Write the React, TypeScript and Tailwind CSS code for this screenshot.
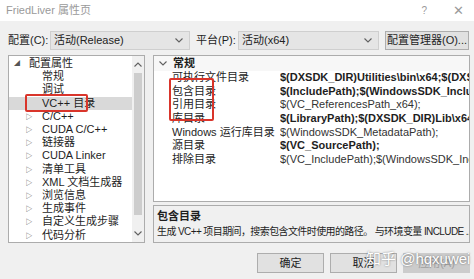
import React from "react";

const font = { fontFamily: '"Liberation Sans", "Noto Sans CJK SC", sans-serif' };

type TreeItem = { label: string; indent: number; mark?: "open" | "closed"; selected?: boolean };

const tree: TreeItem[] = [
  { label: "配置属性", indent: 0, mark: "open" },
  { label: "常规", indent: 1 },
  { label: "调试", indent: 1 },
  { label: "VC++ 目录", indent: 1, selected: true },
  { label: "C/C++", indent: 1, mark: "closed" },
  { label: "CUDA C/C++", indent: 1, mark: "closed" },
  { label: "链接器", indent: 1, mark: "closed" },
  { label: "CUDA Linker", indent: 1, mark: "closed" },
  { label: "清单工具", indent: 1, mark: "closed" },
  { label: "XML 文档生成器", indent: 1, mark: "closed" },
  { label: "浏览信息", indent: 1, mark: "closed" },
  { label: "生成事件", indent: 1, mark: "closed" },
  { label: "自定义生成步骤", indent: 1, mark: "closed" },
  { label: "代码分析", indent: 1, mark: "closed" },
  { label: "MASM (程序)", indent: 1, mark: "closed" },
];

const props: { name: string; value: string; bold: boolean }[] = [
  { name: "可执行文件目录", value: "$(DXSDK_DIR)Utilities\\bin\\x64;$(DXSDK_DIR)Utilities\\bin\\x86", bold: true },
  { name: "包含目录", value: "$(IncludePath);$(WindowsSDK_IncludePath);$(DXSDK_DIR)", bold: true },
  { name: "引用目录", value: "$(VC_ReferencesPath_x64);", bold: false },
  { name: "库目录", value: "$(LibraryPath);$(DXSDK_DIR)Lib\\x64;$(KINECTSDK20_DIR)", bold: true },
  { name: "Windows 运行库目录", value: "$(WindowsSDK_MetadataPath);", bold: false },
  { name: "源目录", value: "$(VC_SourcePath);", bold: true },
  { name: "排除目录", value: "$(VC_IncludePath);$(WindowsSDK_IncludePath);$(MSBuild)", bold: false },
];

function Chevron({ up }: { up?: boolean }) {
  return (
    <svg width="8" height="5" viewBox="0 0 8 5" className="block shrink-0">
      <path d={up ? "M0.5 4.5 L4 1 L7.5 4.5" : "M0.5 0.5 L4 4 L7.5 0.5"} fill="none" stroke="#606060" strokeWidth="1.1" />
    </svg>
  );
}

function Combo({ text, width }: { text: string; width: string }) {
  return (
    <div className={`flex h-[19px] shrink-0 ${width} items-center justify-between border border-[#cfcfcf] bg-[#e5e5e5] pl-[3px] pr-[6px] text-[11px] text-[#222]`}>
      <span className="whitespace-nowrap">{text}</span>
      <Chevron />
    </div>
  );
}

export default function App() {
  return (
    <div className="relative h-[279px] w-[474px] overflow-hidden bg-[#f0f0f0] text-[11px] leading-[13px] text-[#1e1e1e]" style={font}>
      <div className="flex h-[21px] items-center justify-between bg-white pl-[6px] pr-[10px] text-[11px] text-[#9a9a9a]">
        <span>FriedLiver 属性页</span>
        <div className="flex items-center gap-[26px] text-[#9a9a9a]">
          <span className="text-[10px]">?</span>
          <span className="text-[13px]">✕</span>
        </div>
      </div>

      <div className="pl-[8px] pr-[4px] pt-[10px]">
        <div className="flex h-[19px] items-center whitespace-nowrap text-[11px]">
          <span className="w-[42px] shrink-0">配置(C):</span>
          <Combo text="活动(Release)" width="w-[140px]" />
          <span className="ml-[6px] w-[42px] shrink-0">平台(P):</span>
          <Combo text="活动(x64)" width="w-[141px]" />
          <div className="ml-[6px] flex h-[19px] w-[84px] shrink-0 items-center justify-center border border-[#adadad] bg-[#e1e1e1]">
            配置管理器(O)...
          </div>
        </div>

        <div className="mt-[5px] flex h-[188px] gap-[8px]">
          <div className="flex w-[137px] shrink-0 border border-[#acacac] bg-white">
            <div className="flex-1 overflow-hidden pt-[1px]">
              {tree.map((t) => (
                <div
                  key={t.label}
                  className={`relative flex h-[13.2px] items-center whitespace-nowrap ${t.selected ? "bg-[#d9d9d9]" : ""}`}
                  style={{ paddingLeft: t.indent ? 15 : 3 }}
                >
                  <span className="flex w-[10px] shrink-0 items-center justify-center text-[#555]">
                    {t.mark === "open" && <span className="text-[6px]">◢</span>}
                    {t.mark === "closed" && <span className="text-[7px]">▷</span>}
                  </span>
                  <span className={t.indent ? "ml-[8px]" : "ml-[7px]"}>{t.label}</span>
                  {t.selected && (
                    <span className="absolute left-[16px] top-[-3px] h-[18px] w-[63px] rounded-[2px] border-2 border-[#d9352b]" />
                  )}
                </div>
              ))}
            </div>
            <div className="flex w-[12px] shrink-0 flex-col items-center bg-[#f0f0f0]">
              <div className="flex h-[17px] items-center">
                <Chevron up />
              </div>
              <div className="h-[142px] w-[8px] bg-[#cdcdcd]" />
              <div className="mt-auto flex h-[17px] items-center">
                <Chevron />
              </div>
            </div>
          </div>

          <div className="flex w-[317px] shrink-0 flex-col gap-[3px]">
            <div className="h-[147px] overflow-hidden border border-[#acacac] bg-white">
              <div className="flex h-[15px] items-center bg-[#f7f7f7] pl-[5px]">
                <Chevron />
                <span className="ml-[6px] font-bold">常规</span>
              </div>
              <div className="relative">
                {props.map((p) => (
                  <div key={p.name} className="flex h-[13.6px] items-center whitespace-nowrap">
                    <span className="w-[126px] shrink-0 pl-[18px]">{p.name}</span>
                    <span className={`overflow-hidden ${p.bold ? "font-bold" : "text-[#333]"}`}>{p.value}</span>
                  </div>
                ))}
                <span className="absolute left-[15px] top-[7px] h-[43px] w-[45px] rounded-[2px] border-2 border-[#d9352b]" />
              </div>
            </div>
            <div className="h-[38px] overflow-hidden border border-[#acacac] bg-[#f0f0f0] px-[3px] pt-[3px] leading-[15px]">
              <div className="font-bold">包含目录</div>
              <div className="whitespace-nowrap text-[10px] tracking-[-0.6px]">生成 VC++ 项目期间，搜索包含文件时使用的路径。 与环境变量 INCLUDE ...</div>
            </div>
          </div>
        </div>

        <div className="mt-[10px] flex justify-end gap-[6px]">
          <div className="flex h-[20px] w-[67px] items-center justify-center border border-[#adadad] bg-[#e1e1e1]">确定</div>
          <div className="flex h-[20px] w-[67px] items-center justify-center border border-[#adadad] bg-[#e1e1e1]">取消</div>
          <div className="flex h-[20px] w-[67px] items-center justify-center border border-[#cccccc] bg-[#cccccc] text-[#a0a0a0]">应用(A)</div>
        </div>
      </div>

      <div className="absolute left-[366px] top-[250px] whitespace-nowrap text-[15px] leading-[18px] text-white [text-shadow:0_0_2px_rgba(0,0,0,0.5)]">
        知乎 @hqxuwei
      </div>
    </div>
  );
}
